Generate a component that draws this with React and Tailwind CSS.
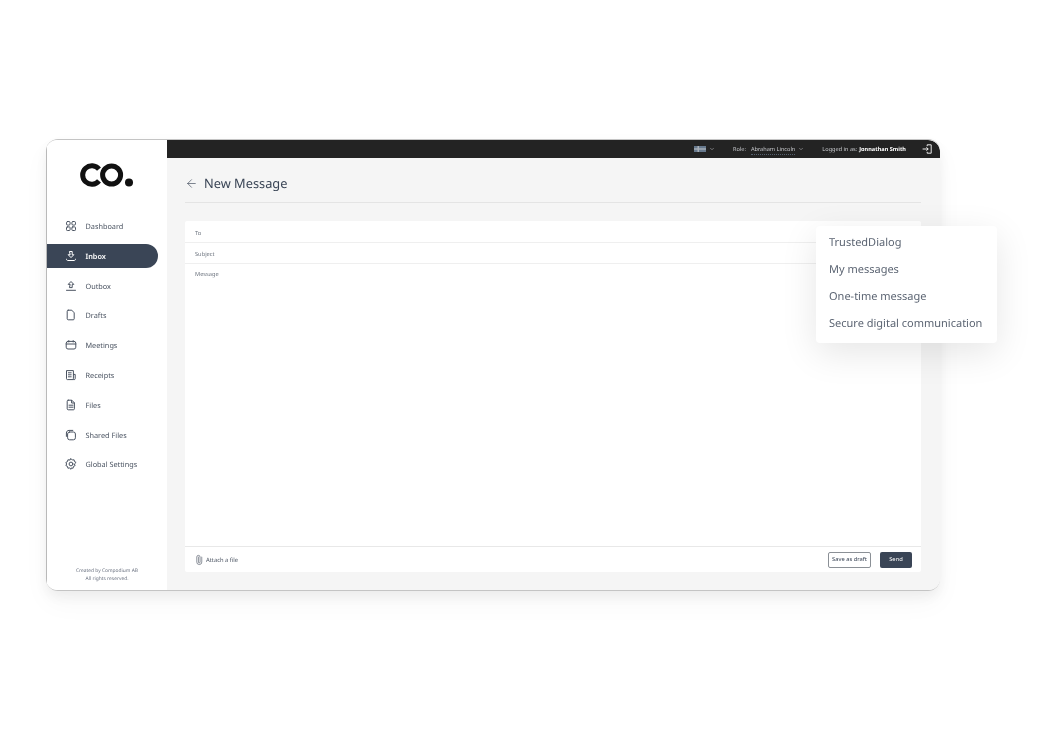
import { ArrowLeft, ChevronDown, Paperclip } from "lucide-react";

// nav icons are drawn by hand, the packaged ones don't have these shapes
const Svg = ({ children }) => (
  <svg width="12" height="12" viewBox="0 0 12 12" fill="none" stroke="currentColor" strokeWidth="1" strokeLinejoin="round" strokeLinecap="round">
    {children}
  </svg>
);

const DashboardIcon = () => (
  <Svg>
    <rect x="1.5" y="1.5" width="3.6" height="3.6" rx="1.2" />
    <rect x="6.9" y="1.5" width="3.6" height="3.6" rx="1.2" />
    <rect x="1.5" y="6.9" width="3.6" height="3.6" rx="0.8" />
    <rect x="6.9" y="6.9" width="3.6" height="3.6" rx="0.8" />
  </Svg>
);

const InboxIcon = () => (
  <Svg>
    <path d="M4.8 1.5h2.4v3.2h1.6L6 7.6 3.2 4.7h1.6z" />
    <path d="M1.5 9.2c0 .8.5 1.3 1.2 1.3h6.6c.7 0 1.2-.5 1.2-1.3" />
  </Svg>
);

const OutboxIcon = () => (
  <Svg>
    <path d="M4.8 7.6h2.4V4.4h1.6L6 1.5 3.2 4.4h1.6z" />
    <path d="M1.5 10.3h9" />
  </Svg>
);

const DraftIcon = () => (
  <Svg>
    <path d="M3.2 1.2h3.6l2.4 2.6v6c0 .6-.4 1-1 1H3.2c-.6 0-1-.4-1-1v-7.6c0-.6.4-1 1-1z" />
  </Svg>
);

const MeetingIcon = () => (
  <Svg>
    <rect x="1.2" y="2.4" width="9.6" height="7.6" rx="1.8" />
    <path d="M1.2 5h9.6M3.8 1.6v1.4M8.2 1.6v1.4" />
  </Svg>
);

const ReceiptIcon = () => (
  <Svg>
    <path d="M8.4 10.6H2.4c-.5 0-.9-.4-.9-.9V1.6h6.9v8.1c0 .5.4.9.9.9s.9-.4.9-.9V5.4H8.4" />
    <path d="M3.4 3.8h2.8M3.4 5.8h2.8M3.4 7.8h2.8" />
  </Svg>
);

const FileIcon = () => (
  <Svg>
    <path d="M3.2 1.2h3.6l2.6 2.6v6c0 .6-.4 1-1 1H3.2c-.6 0-1-.4-1-1v-7.6c0-.6.4-1 1-1z" />
    <path d="M6.6 1.4v2.6h2.6M4 6.2h4M4 8.2h4" />
  </Svg>
);

const SharedIcon = () => (
  <Svg>
    <rect x="2.6" y="3" width="7.8" height="7.8" rx="2" />
    <path d="M1.4 7.4V4c0-1.5 1-2.6 2.6-2.6h3.8" />
  </Svg>
);

const GearIcon = () => (
  <Svg>
    <path d="M6 .7l1.3 1.3 1.8-.2.4 1.8 1.6.8L9.4 6l.7 1.6-1.6.8-.4 1.8-1.8-.2L6 11.3 4.7 10l-1.8.2-.4-1.8-1.6-.8L1.6 6l-.7-1.6 1.6-.8.4-1.8 1.8.2z" />
    <circle cx="6" cy="6" r="1.9" />
  </Svg>
);

const navItems = [
  { label: "Dashboard", icon: DashboardIcon },
  { label: "Inbox", icon: InboxIcon, active: true },
  { label: "Outbox", icon: OutboxIcon },
  { label: "Drafts", icon: DraftIcon },
  { label: "Meetings", icon: MeetingIcon },
  { label: "Receipts", icon: ReceiptIcon },
  { label: "Files", icon: FileIcon },
  { label: "Shared Files", icon: SharedIcon },
  { label: "Global Settings", icon: GearIcon },
];

const menuItems = ["TrustedDialog", "My messages", "One-time message", "Secure digital communication"];

const Flag = () => (
  <svg width="12" height="6" viewBox="0 0 12 6">
    <rect width="12" height="6" fill="#66788c" />
    <rect x="3.5" width="1.5" height="6" fill="#a9b0b8" />
    <rect y="2.3" width="12" height="1.4" fill="#a9b0b8" />
  </svg>
);

const Logo = () => (
  <svg width="56" height="24" viewBox="0 0 56 24" fill="none" stroke="#111111" strokeWidth="5" role="img" aria-label="co. logo">
    <path d="M20 6.2A9.2 9.2 0 1 0 20 17.8" />
    <circle cx="32.6" cy="12" r="9" />
    <circle cx="50" cy="19.4" r="4" fill="#111111" stroke="none" />
  </svg>
);

const Sidebar = () => (
  <aside className="w-[121px] shrink-0 flex flex-col bg-white border-l border-[#b9b9b9]">
    <div className="h-[68px] pl-[32px] pt-[23px]">
      <Logo />
    </div>
    <nav className="flex flex-col gap-[5.8px] pt-[6px]">
      {navItems.map((item) => {
        const Icon = item.icon;
        return (
          <div
            key={item.label}
            className={`h-[24px] w-[111px] flex items-center gap-[8.5px] pl-[18px] rounded-r-[12px] text-[7.3px] ${
              item.active ? "bg-[#3a4556] text-white font-semibold" : "text-[#4a5361]"
            }`}
          >
            <Icon />
            <span className="pt-[3px]">{item.label}</span>
          </div>
        );
      })}
    </nav>
    <div className="mt-auto pb-[7px] text-center text-[4.9px] leading-[8px] text-[#6b7280]">
      <p>Created by Compodium AB</p>
      <p>All rights reserved.</p>
    </div>
  </aside>
);

const LogoutIcon = () => (
  <svg width="10" height="10" viewBox="0 0 10 10" fill="none" stroke="white" strokeWidth="0.9" className="ml-[16px]">
    <path d="M5.2 2.2V.8h4v8.4h-4V7.8M.6 5h5.6M4.4 3.4 6.2 5 4.4 6.6" />
  </svg>
);

const TopBar = () => (
  <header className="h-[18px] shrink-0 bg-[#232323] rounded-tr-[12px] flex items-center justify-end pr-[8px] text-[5.6px] text-[#c9cbcf]">
    <Flag />
    <ChevronDown size={6} strokeWidth={2} className="ml-[3px] mr-[18px]" />
    <span>Role:</span>
    <span className="ml-[5px] mt-[2px] border-b border-dotted border-[#55606e] pb-px">Abraham Lincoln</span>
    <ChevronDown size={6} strokeWidth={2} className="ml-[3px] mr-[18px]" />
    <span>Logged in as:</span>
    <span className="ml-[2px] font-bold text-white">Jonnathan Smith</span>
    <LogoutIcon />
  </header>
);

export default function App() {
  return (
    <div className="relative min-h-screen bg-white pt-[139px] pl-[46px] font-['Noto_Sans',sans-serif] overflow-hidden will-change-transform [text-rendering:geometricPrecision]">
      <div className="w-[894px] h-[452px] flex rounded-[12px] overflow-hidden border-t border-b border-[#c4c4c4] shadow-[0_6px_12px_rgba(0,0,0,0.05),0_12px_28px_rgba(0,0,0,0.035)]">
        <Sidebar />
        <main className="flex-1 flex flex-col bg-[#f5f5f5] min-w-0">
          <TopBar />
          <div className="flex-1 flex flex-col pl-[18px] pr-[19px] pb-[18px]">
            <div className="h-[45px] mb-[18px] shrink-0 border-b border-[#e4e4e4] flex items-center gap-[6px] pt-[7px] text-[12.8px] text-[#3a4556]">
              <ArrowLeft size={13} strokeWidth={1.2} />
              New Message
            </div>
            <div className="flex-1 flex flex-col bg-white rounded-[2px]">
              <div className="h-[22px] shrink-0 border-b border-[#efefef] pl-[10px] pt-[4px] flex items-center text-[5.7px] text-[#6f7680]">
                To
              </div>
              <div className="h-[21px] shrink-0 border-b border-[#efefef] pl-[10px] pt-[2px] flex items-center text-[5.7px] text-[#6f7680]">
                Subject
              </div>
              <div className="flex-1 pl-[10px] pt-[6px] text-[5.7px] text-[#6f7680]">Message</div>
              <div className="h-[26px] shrink-0 border-t border-[#e8e8e8] flex items-center pl-[9px] pr-[9px]">
                <Paperclip size={10} strokeWidth={1.4} className="text-[#4a5361] -rotate-45" />
                <span className="ml-[2px] pt-[1px] text-[5.8px] text-[#4a5361]">Attach a file</span>
                <button className="ml-auto w-[43px] h-[16px] rounded-[2px] border border-[#8b9096] bg-white text-[5.8px] text-[#3a4556]">
                  Save as draft
                </button>
                <button className="ml-[9px] w-[32px] h-[16px] rounded-[2px] bg-[#3a4556] text-[5.8px] text-white">
                  Send
                </button>
              </div>
            </div>
          </div>
        </main>
      </div>
      <div className="absolute left-[816px] top-[226px] w-[181px] h-[117px] bg-white rounded-[4px] pl-[13px] pt-[4px] flex flex-col shadow-[0_10px_36px_rgba(0,0,0,0.1)]">
        {menuItems.map((item) => (
          <div key={item} className="h-[26.8px] flex items-center text-[11px] text-[#5b6472]">
            {item}
          </div>
        ))}
      </div>
    </div>
  );
}
